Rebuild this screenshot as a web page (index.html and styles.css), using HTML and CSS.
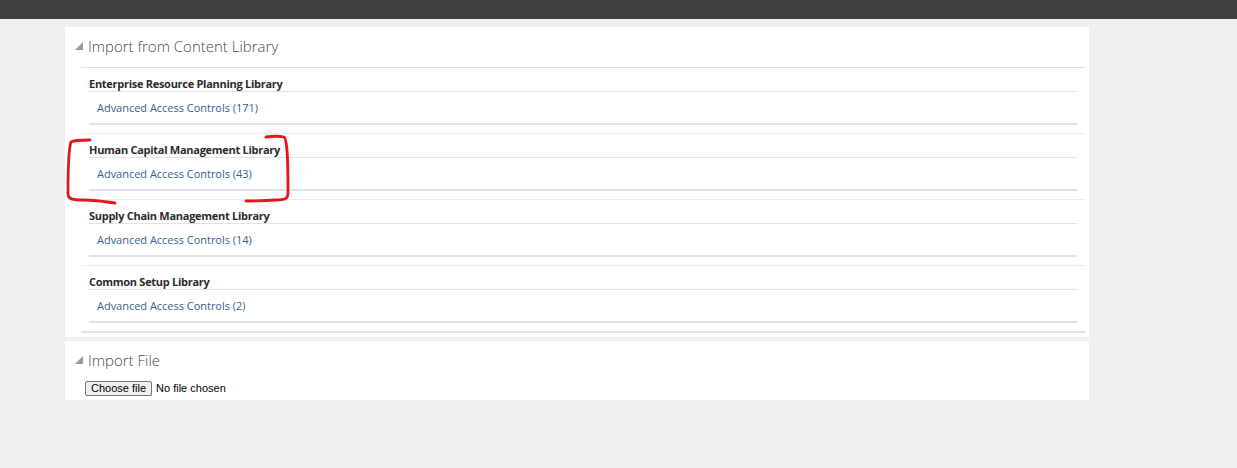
FILE: index.html
```html
<!DOCTYPE html>
<html lang="en">
<head>
    <title>Import</title>
    <link rel="stylesheet" href="styles.css">
</head>
<body>
    <div class="topbar"></div>
    <div class="page">
        <section class="panel">
            <h2 class="panel-head">
                <svg class="disclose" width="8" height="8" viewBox="0 0 8 8"><polygon points="0,8 8,0 8,8" /></svg>
                Import from Content Library
            </h2>
            <div class="panel-body">
                <div class="lib">
                    <div class="lib-title">Enterprise Resource Planning Library</div>
                    <div class="lib-row"><a href="#!">Advanced Access Controls (171)</a></div>
                </div>
                <div class="lib">
                    <div class="lib-title">Human Capital Management Library</div>
                    <div class="lib-row"><a href="#!">Advanced Access Controls (43)</a></div>
                </div>
                <div class="lib">
                    <div class="lib-title">Supply Chain Management Library</div>
                    <div class="lib-row"><a href="#!">Advanced Access Controls (14)</a></div>
                </div>
                <div class="lib">
                    <div class="lib-title">Common Setup Library</div>
                    <div class="lib-row"><a href="#!">Advanced Access Controls (2)</a></div>
                </div>
            </div>
        </section>
        <section class="panel panel-file">
            <h2 class="panel-head">
                <svg class="disclose" width="8" height="8" viewBox="0 0 8 8"><polygon points="0,8 8,0 8,8" /></svg>
                Import File
            </h2>
            <div class="file-row">
                <button type="button" class="file-btn">Choose file</button>
                <span class="file-name">No file chosen</span>
            </div>
        </section>
    </div>

    <!-- hand drawn markup over the screenshot -->
    <svg class="scribble" width="1237" height="468" viewBox="0 0 1237 468">
        <path d="M90 140 C80 140 74 140 71 142 C68 150 68 175 68 194 C68 199 72 200 84 200 C96 200 106 202 115 203" />
        <path d="M266 137 C274 136 280 136 284 137 C288 140 288 170 288 193 C288 199 285 200 276 200 C264 201 254 201 246 201" />
    </svg>
</body>
</html>
```

FILE: styles.css
```css
body {
    margin: 0;
    background-color: #f0f0f0;
    font-family: "Open Sans", "Noto Sans", sans-serif;
    color: #333;
}
.topbar {
    height: 19px;
    background-color: #404040;
}
.page {
    width: 1024px;
    margin-left: 65px;
    padding-top: 8px;
}
.panel {
    background-color: white;
    padding-bottom: 4px;
}
.panel-head {
    display: flex;
    align-items: center;
    gap: 5px;
    height: 40px;
    margin: 0;
    padding: 0 0 2px 10px;
    box-sizing: border-box;
    font-size: 15px;
    font-weight: 300;
    color: #4a4a4a;
}
.disclose {
    fill: #9a9a9a;
    margin-top: -1px;
}
.panel-body {
    margin: 0 4px 0 16px;
    border-top: 1px solid #d9e0e6;
}
.lib {
    padding-bottom: 8px;
    border-bottom: 1px solid #ebebeb;
}
.lib:last-child {
    border-bottom: 2px solid #dce3ea;
}
.lib-title {
    margin: 0 8px;
    padding-top: 9px;
    height: 14px;
    line-height: 14px;
    border-bottom: 1px solid #dde2e7;
    font-size: 11px;
    font-weight: bold;
    letter-spacing: -0.28px;
    color: #2b2b2b;
}
.lib-row {
    margin: 0 8px;
    padding: 9px 0 8px 8px;
    line-height: 14px;
    border-bottom: 2px solid #dce3ea;
    font-size: 11px;
    letter-spacing: -0.02px;
}
.lib-row a {
    color: #335f8e;
    text-decoration: none;
}
.panel-file {
    margin-top: 4px;
    padding-bottom: 0;
}
.file-row {
    display: flex;
    align-items: flex-start;
    gap: 4px;
    height: 19px;
    padding-left: 20px;
    font-family: "Liberation Sans", Arial, sans-serif;
    font-size: 11px;
}
.file-btn {
    font-family: "Liberation Sans", Arial, sans-serif;
    font-size: 11px;
    padding: 0 5px;
    height: 15px;
    line-height: 13px;
    background-color: #efefef;
    border: 1px solid #767676;
    border-radius: 2px;
    color: black;
}
.file-name {
    line-height: 15px;
    color: black;
}
.scribble {
    position: absolute;
    left: 0;
    top: 0;
    pointer-events: none;
    fill: none;
    stroke: #e8141c;
    stroke-width: 2.8;
    stroke-linecap: round;
    stroke-linejoin: round;
}
```
